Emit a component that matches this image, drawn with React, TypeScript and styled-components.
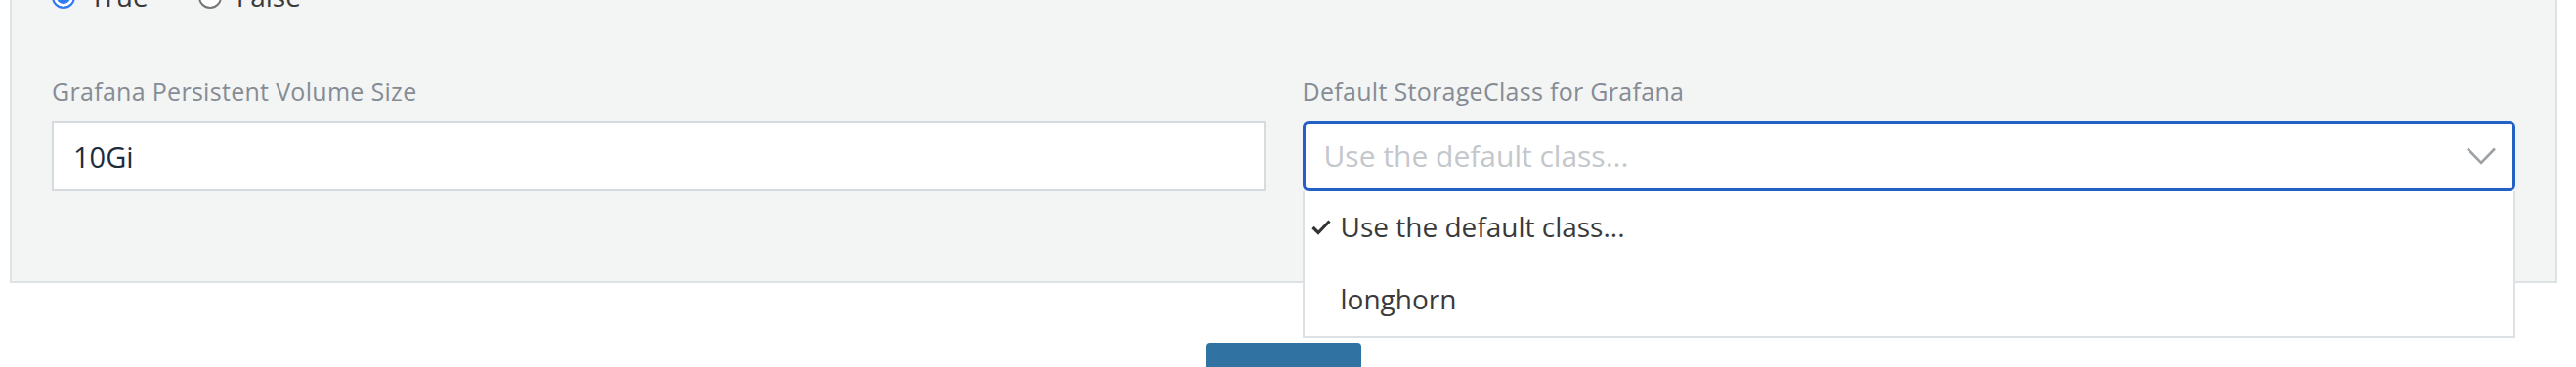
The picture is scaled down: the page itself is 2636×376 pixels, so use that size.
import * as React from "react";
import styled, { createGlobalStyle } from "styled-components";

const GlobalStyle = createGlobalStyle`
  html, body {
    margin: 0;
    padding: 0;
    background: #ffffff;
    overflow: hidden;
  }
  body {
    font-family: "Open Sans", Lato, "Liberation Sans", sans-serif;
  }
`;

const Page = styled.div`
  width: 2636px;
  height: 376px;
  overflow: hidden;
`;

const Panel = styled.section`
  margin: -23px 19px 0 10px;
  padding: 0 41px 92px 41px;
  background: #f3f4f4;
  border: 2px solid #dee2e5;
  border-top: none;
`;

const RadioRow = styled.div`
  display: flex;
  align-items: center;
  height: 40px;
`;

const RadioLabel = styled.label`
  display: flex;
  align-items: center;
  gap: 15px;
  margin-right: 51px;
  font-size: 28px;
  line-height: 1.2;
  color: #3a3a3a;
`;

const RadioDot = styled.span<{ $checked?: boolean }>`
  box-sizing: border-box;
  width: 24px;
  height: 24px;
  border-radius: 50%;
  background: ${(p) => (p.$checked ? "#2f7bf5" : "#ffffff")};
  border: ${(p) => (p.$checked ? "2px solid #2f7bf5" : "2px solid #767676")};
  box-shadow: ${(p) => (p.$checked ? "inset 0 0 0 3px #ffffff" : "none")};
`;

const Grid = styled.div`
  display: grid;
  grid-template-columns: 1fr 1fr;
  column-gap: 38px;
  margin-top: 61px;
`;

const Field = styled.div`
  display: flex;
  flex-direction: column;
`;

const Label = styled.div`
  font-size: 25px;
  line-height: 1.2;
  letter-spacing: 0.3px;
  color: #868c94;
  margin-bottom: 16px;
`;

const TextInput = styled.input`
  box-sizing: border-box;
  height: 72px;
  width: 100%;
  padding: 0 20px;
  border: 2px solid #d5dbde;
  border-radius: 0;
  background: #ffffff;
  font-family: inherit;
  font-size: 29px;
  color: #1e2c3c;
  outline: none;
`;

const SelectWrap = styled.div`
  position: relative;
`;

const SelectBox = styled.div`
  box-sizing: border-box;
  height: 72px;
  display: flex;
  align-items: center;
  justify-content: space-between;
  padding: 0 17px 0 19px;
  border: 3px solid #2361c6;
  border-radius: 6px;
  background: #ffffff;
`;

const Placeholder = styled.span`
  font-size: 30px;
  line-height: 1.2;
  color: #c4c7cb;
`;

const Menu = styled.ul`
  position: absolute;
  top: 100%;
  left: 0;
  right: 0;
  margin: 0;
  padding: 0;
  list-style: none;
  background: #ffffff;
  border: 2px solid #dee1e4;
  border-top: none;
  z-index: 2;
`;

const Option = styled.li`
  display: flex;
  align-items: center;
  height: 74px;
  padding-left: 7px;
  font-size: 28px;
  line-height: 1.2;
  color: #3a3a3a;
`;

const CheckSlot = styled.span`
  display: flex;
  align-items: center;
  width: 30px;
  height: 20px;
`;

const Footer = styled.div`
  display: flex;
  justify-content: center;
  margin: 61px 19px 0 10px;
`;

const PrimaryButton = styled.button`
  width: 159px;
  height: 70px;
  border: none;
  border-radius: 4px;
  background: #3073a3;
  color: #ffffff;
  font-family: inherit;
  font-size: 28px;
`;

const Check = () => (
  <svg width="20" height="16" viewBox="0 0 20 16">
    <polyline points="1.5,8 7,13.5 18.5,1.5" fill="none" stroke="#333333" strokeWidth="3.2" />
  </svg>
);

const Chevron = () => (
  <svg width="30" height="18" viewBox="0 0 30 18">
    <polyline points="1,1.5 15,16 29,1.5" fill="none" stroke="#9da1a5" strokeWidth="2.6" />
  </svg>
);

const options = [
  { label: "Use the default class...", selected: true },
  { label: "longhorn", selected: false },
];

export default function App() {
  return (
    <Page>
      <GlobalStyle />
      <Panel>
        <RadioRow>
          <RadioLabel>
            <RadioDot $checked />
            True
          </RadioLabel>
          <RadioLabel>
            <RadioDot />
            False
          </RadioLabel>
        </RadioRow>
        <Grid>
          <Field>
            <Label>Grafana Persistent Volume Size</Label>
            <TextInput defaultValue="10Gi" />
          </Field>
          <Field>
            <Label>Default StorageClass for Grafana</Label>
            <SelectWrap>
              <SelectBox>
                <Placeholder>Use the default class...</Placeholder>
                <Chevron />
              </SelectBox>
              <Menu>
                {options.map((o) => (
                  <Option key={o.label}>
                    <CheckSlot>{o.selected && <Check />}</CheckSlot>
                    {o.label}
                  </Option>
                ))}
              </Menu>
            </SelectWrap>
          </Field>
        </Grid>
      </Panel>
      <Footer>
        <PrimaryButton>Enable</PrimaryButton>
      </Footer>
    </Page>
  );
}
